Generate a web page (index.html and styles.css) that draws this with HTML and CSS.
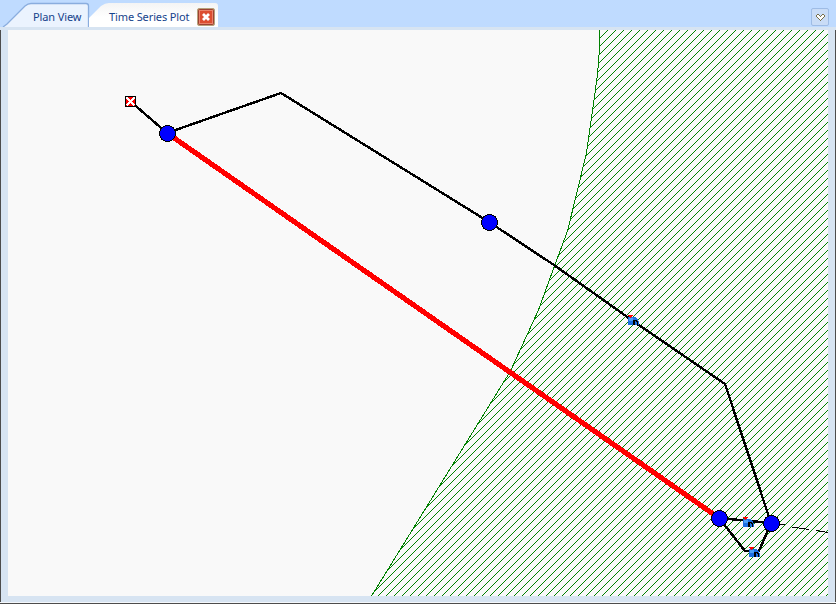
FILE: index.html
```html
<!DOCTYPE html>
<html>
<head>
    <meta charset="utf-8">
    <title>Time Series Plot</title>
    <link rel="stylesheet" href="styles.css">
</head>
<body>
    <div class="tabs">
        <div class="tab plan">
            <svg class="tab-shape" width="90" height="27">
                <path class="plan-fill" d="M3 27 L7 24 L25 6 Q28 3.5 31 3.5 H86 Q88.5 3.5 88.5 6 V27 Z"/>
                <path class="plan-line" d="M3 27 L7 24 L25 6 Q28 3.5 31 3.5 H86 Q88.5 3.5 88.5 6 V27"/>
            </svg>
            <span>Plan View</span>
        </div>
        <div class="tab active">
            <svg class="tab-shape" width="130" height="27">
                <defs>
                    <linearGradient id="tabFade" x1="0" y1="0" x2="0" y2="1">
                        <stop offset="0" stop-color="#f4f4f4"/>
                        <stop offset="0.6" stop-color="#fff"/>
                    </linearGradient>
                </defs>
                <path fill="url(#tabFade)" d="M0 27 V18 L12 6 Q16 3 20 3 H126 Q129 3 129 6 V27 Z"/>
            </svg>
            <span>Time Series Plot</span>
            <svg class="close" width="18" height="18">
                <rect x="0.5" y="0.5" width="17" height="17" rx="1.5" fill="#b99d6c" stroke="#b7a27c"/>
                <rect x="1.5" y="1.5" width="15" height="15" rx="1" fill="#e9836a" stroke="#9d4132"/>
                <rect x="3" y="3" width="12" height="12" fill="#dc4d30"/>
                <path d="M6 6 L12 12 M12 6 L6 12" stroke="#fff" stroke-width="2.8"/>
            </svg>
        </div>
        <div class="dropdown">
            <svg width="9" height="7" shape-rendering="crispEdges">
                <path fill="#fff" d="M1 1h3v1h1v-1h3v2h-1v1h-1v1h-1v1h-1v-1h-1v-1h-1v-1h-1z"/>
                <path fill="#776f4b" d="M1 0h2v1h-2zM6 0h2v1h-2zM0 1h1v2h-1zM3 1h1v1h-1zM5 1h1v1h-1zM8 1h1v2h-1zM4 2h1v1h-1zM1 3h1v1h-1zM7 3h1v1h-1zM2 4h1v1h-1zM6 4h1v1h-1zM3 5h1v1h-1zM5 5h1v1h-1zM4 6h1v1h-1z"/>
            </svg>
        </div>
    </div>

    <div class="frame">
        <svg class="plot" viewBox="8 30 820 566" width="820" height="566" shape-rendering="crispEdges">
            <defs>
                <pattern id="hatch" width="8" height="8" patternUnits="userSpaceOnUse">
                    <path fill="#008000" d="M5 0h1v1h-1zM4 1h1v1h-1zM3 2h1v1h-1zM2 3h1v1h-1zM1 4h1v1h-1zM0 5h1v1h-1zM7 6h1v1h-1zM6 7h1v1h-1z"/>
                </pattern>
                <g id="pump">
                    <path fill="#1c6fe0" d="M0 2h8v1h1v1h1v2h1v4h-11z"/>
                    <path fill="#4ba0f5" d="M1 3h4v3h-4z"/>
                    <path fill="#f00" d="M0 0h5v1h-1v1h-1v1h-1v-1h-1v-1h-1z"/>
                    <path fill="#000" d="M5 5h4v1h1v4h-1v-3h-1v-1h-1v4h-2z"/>
                </g>
            </defs>

            <!-- tank area -->
            <path fill="url(#hatch)" d="M600 30 L599 50 L597 75 L586 153 L567 231 L554 266 L538 310 L510 371 L372 596 H828 V30 Z"/>
            <path class="edge" d="M599.5 30 L599.5 49 L597.5 75 L586.5 153 L567.5 231 L554.5 266 L538.5 310 L510.5 371 L371.5 596"/>

            <!-- pipes -->
            <path class="pipe" d="M130 101 L167 133 L281 93 L489 222 L554 265 L633 321 L725 384 L771 523 L719 518 L745 551 H759 L771 523"/>
            <path class="dashed" d="M771 524.5 H785 M792 527 L809 529.5 M816 530.5 L828 532.5"/>
            <path class="selected" d="M167 133 L719 518"/>

            <!-- nodes -->
            <g class="node">
                <circle cx="167.5" cy="133.5" r="8"/>
                <circle cx="489.5" cy="222.5" r="8"/>
                <circle cx="719.5" cy="518.5" r="8"/>
                <circle cx="771.5" cy="523.5" r="8"/>
            </g>
            <rect x="125.5" y="96.5" width="10" height="10" fill="#f00" stroke="#000"/>
            <path d="M126.5 97.5 L134.5 105.5 M134.5 97.5 L126.5 105.5" stroke="#fff" stroke-width="1.5"/>

            <use href="#pump" x="628" y="315"/>
            <use href="#pump" x="743" y="517"/>
            <use href="#pump" x="749" y="547"/>
        </svg>
    </div>
</body>
</html>
```
FILE: styles.css
```css
body {
    margin: 0;
    height: 604px;
    background-color: #bfdbff;
    font-family: "Noto Sans", "Open Sans", sans-serif;
    font-size: 11px;
    letter-spacing: -0.12px;
    color: #15428b;
    overflow: hidden;
}
.tabs {
    display: flex;
    height: 27px;
}
.tab {
    position: relative;
    box-sizing: border-box;
    height: 27px;
    line-height: 15px;
    padding-top: 9px;
    white-space: nowrap;
}
.tab span {
    position: relative;
    display: block;
}
.plan {
    width: 89px;
    padding-left: 33px;
}
.active {
    display: flex;
    width: 129px;
    padding-left: 20px;
}
.active span {
    width: 88px;
}
.tab-shape {
    position: absolute;
    top: 0;
    left: 0;
}
.plan-fill {
    fill: #ebf3fe;
}
.plan-line {
    fill: none;
    stroke: #8aadde;
    stroke-width: 1.3;
}
.close {
    position: relative;
    margin-top: -1px;
}
.dropdown {
    display: flex;
    align-items: center;
    justify-content: center;
    box-sizing: border-box;
    width: 18px;
    height: 18px;
    margin: 8px 7px 0 auto;
    border: 1px solid #9ebce5;
    border-radius: 2px;
    background-color: #c9dcf6;
}
.frame {
    box-sizing: border-box;
    height: 577px;
    padding: 3px 8px 8px;
    background-color: #d7e4f2;
    border-bottom: 1px solid #4c4c4c;
    background-image: linear-gradient(#4c4c4c, #4c4c4c), linear-gradient(#4c4c4c, #4c4c4c);
    background-size: 1px 100%;
    background-position: 0 3px, 100% 3px;
    background-repeat: no-repeat;
    box-shadow: inset 0 -1px #f4f7fb;
}
.plot {
    display: block;
    background-color: #f9f9f9;
}
.edge {
    fill: none;
    stroke: #008000;
    stroke-width: 1;
}
.pipe {
    fill: none;
    stroke: #000;
    stroke-width: 2.4;
}
.dashed {
    fill: none;
    stroke: #000;
    stroke-width: 1;
}
.selected {
    stroke: #f00;
    stroke-width: 5.2;
}
.node circle {
    fill: #00f;
    stroke: #000;
    stroke-width: 1;
}
```
